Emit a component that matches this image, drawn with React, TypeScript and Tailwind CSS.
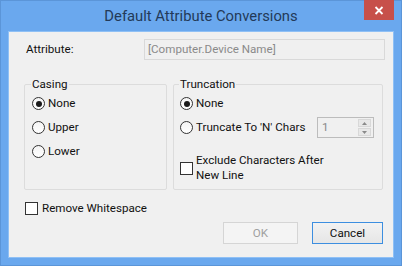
import React from "react";

const font = { fontFamily: 'Roboto, "Noto Sans", sans-serif' };

function Radio({ checked }: { checked?: boolean }) {
  return (
    <div className="w-[13px] h-[13px] rounded-full border border-[#333] bg-gradient-to-b from-[#f4f4f4] to-white flex items-center justify-center shrink-0">
      {checked && <div className="w-[6px] h-[6px] rounded-full bg-[#1a1a1a]" />}
    </div>
  );
}

function Check() {
  return <div className="w-[13px] h-[13px] border border-[#333] bg-white shrink-0" />;
}

export default function App() {
  return (
    <div
      className="w-[402px] h-[266px] bg-[#6aa8ee] border border-[#5b95d8] flex flex-col text-[11.6px] text-[#111] leading-[15px]"
      style={font}
    >
      <div className="h-[30px] relative flex items-center justify-center">
        <span className="text-[14.8px] text-[#233a58] pt-[1px]">Default Attribute Conversions</span>
        <div className="absolute top-[-1px] right-[7px] w-[30px] h-[20px] bg-[#c7504a] flex items-center justify-center">
          <svg width="10" height="9" viewBox="0 0 10 9">
            <path d="M1.5 1 L8.5 8 M8.5 1 L1.5 8" stroke="#fff" strokeWidth="1.8" />
          </svg>
        </div>
      </div>
      <div className="mx-[7px] h-[227px] bg-[#f0f0f0] border border-[#8fc0f5] flex flex-col">
        <div className="flex items-center mt-[7px] h-[21px]">
          <span className="ml-[17px] w-[118px]">Attribute:</span>
          <div className="w-[241px] h-[21px] border border-[#d9d9d9] bg-[#f0f0f0] flex items-center px-[3px] text-[#8a8a8a]">
            [Computer.Device Name]
          </div>
        </div>
        <div className="flex mt-[17px] ml-[15px] gap-[6px]">
          <fieldset className="w-[143px] h-[113px] border border-[#dcdcdc] rounded-[2px] px-[7px] pt-0">
            <legend className="px-[1px] ml-[-1px]">Casing</legend>
            <div className="flex flex-col gap-[9px] mt-[4px]">
              <div className="flex items-center gap-[3px] h-[15px]"><Radio checked /><span>None</span></div>
              <div className="flex items-center gap-[3px] h-[15px]"><Radio /><span>Upper</span></div>
              <div className="flex items-center gap-[3px] h-[15px]"><Radio /><span>Lower</span></div>
            </div>
          </fieldset>
          <fieldset className="w-[210px] h-[113px] border border-[#dcdcdc] rounded-[2px] px-[6px] pt-0">
            <legend className="px-[1px] ml-[-1px]">Truncation</legend>
            <div className="flex flex-col mt-[4px]">
              <div className="flex items-center gap-[3px] h-[15px]"><Radio checked /><span>None</span></div>
              <div className="flex items-center h-[21px] mt-[6px]">
                <div className="flex items-center gap-[3px] w-[137px]"><Radio /><span>Truncate To 'N' Chars</span></div>
                <div className="w-[57px] h-[21px] border border-[#bcbcbc] bg-[#f0f0f0] flex items-center justify-between pl-[4px] pr-[2px] text-[#8a8a8a]">
                  <span>1</span>
                  <div className="w-[13px] h-[17px] flex flex-col gap-[1px]">
                    <div className="flex-1 bg-[#e8e8e8] border border-[#d8d8d8] flex items-center justify-center">
                      <svg width="5" height="3" viewBox="0 0 5 3"><path d="M0 3 L2.5 0 L5 3Z" fill="#8a8a8a" /></svg>
                    </div>
                    <div className="flex-1 bg-[#e8e8e8] border border-[#d8d8d8] flex items-center justify-center">
                      <svg width="5" height="3" viewBox="0 0 5 3"><path d="M0 0 L2.5 3 L5 0Z" fill="#8a8a8a" /></svg>
                    </div>
                  </div>
                </div>
              </div>
              <div className="flex items-center gap-[3px] mt-[15px]">
                <Check />
                <div className="flex flex-col leading-[15px]">
                  <span>Exclude Characters After</span>
                  <span>New Line</span>
                </div>
              </div>
            </div>
          </fieldset>
        </div>
        <div className="flex items-center gap-[4px] ml-[16px] mt-[11px] h-[15px]">
          <Check />
          <span>Remove Whitespace</span>
        </div>
        <div className="flex justify-end gap-[14px] mr-[10px] mt-[6px]">
          <div className="w-[75px] h-[22px] border border-[#d5d5d5] bg-[#f4f4f4] flex items-center justify-center text-[#a0a0a0]">OK</div>
          <div className="w-[71px] h-[22px] border border-[#3c8ee0] bg-gradient-to-b from-[#f2f2f2] to-[#e6e6e6] flex items-center justify-center">Cancel</div>
        </div>
      </div>
    </div>
  );
}
